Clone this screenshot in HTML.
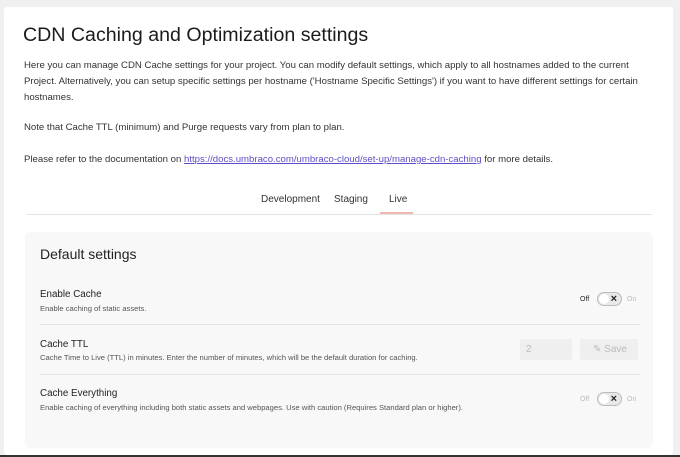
<!DOCTYPE html>
<html><head><style>
*{margin:0;padding:0;box-sizing:border-box}
body{width:680px;height:457px;background:#f0f0f0;font-family:"Liberation Sans",sans-serif;position:relative;overflow:hidden;color:#222}
.card{position:absolute;left:4px;top:7px;width:669px;height:448px;background:#fff;border-radius:3px}
.bot{position:absolute;left:0;top:455px;width:680px;height:2px;background:#333}
.a{position:absolute;white-space:nowrap}
h1{position:absolute;left:23px;top:24px;font-size:19.6px;font-weight:normal;color:#1b1b1b}
.p{font-size:9.6px;color:#333}
a{color:#5b4fc7;text-decoration:underline}
.tab{font-size:10px;color:#333}
.panel{position:absolute;left:25px;top:232px;width:628px;height:216px;background:#f8f8f8;border-radius:6px}
.lbl{font-size:9.8px;color:#222}
.desc{font-size:7.6px;color:#555}
.hr{position:absolute;left:40px;width:600px;height:1px;background:#e6e6e6}
.tg{position:absolute;width:25px;height:14px;border:1px solid #bbb;border-radius:7px;background:#e8e8e8}
.tg:before{content:"";position:absolute;left:1px;top:1px;width:10px;height:10px;border-radius:50%;background:#fff}
.tg:after{content:"×";position:absolute;right:4px;top:0;line-height:12px;font-size:11px;font-weight:bold;color:#222}
.sm{font-size:7px}
</style></head><body>
<div class="card"></div>
<div class="bot"></div>
<h1>CDN Caching and Optimization settings</h1>
<div class="a p" style="left:24px;top:60px">Here you can manage CDN Cache settings for your project. You can modify default settings, which apply to all hostnames added to the current</div>
<div class="a p" style="left:24px;top:76px">Project. Alternatively, you can setup specific settings per hostname ('Hostname Specific Settings') if you want to have different settings for certain</div>
<div class="a p" style="left:24px;top:92px">hostnames.</div>
<div class="a p" style="left:24px;top:122px">Note that Cache TTL (minimum) and Purge requests vary from plan to plan.</div>
<div class="a p" style="left:24px;top:154px">Please refer to the documentation on <a>https://docs.umbraco.com/umbraco-cloud/set-up/manage-cdn-caching</a> for more details.</div>
<div class="a tab" style="left:261px;top:194px">Development</div>
<div class="a tab" style="left:334px;top:194px">Staging</div>
<div class="a tab" style="left:389px;top:194px">Live</div>
<div class="a" style="left:26px;top:214px;width:626px;height:1px;background:#e4e4e4"></div>
<div class="a" style="left:380px;top:212px;width:33px;height:2px;background:#f0b8b0"></div>
<div class="panel"></div>
<div class="a" style="left:40px;top:246px;font-size:14px;color:#222">Default settings</div>
<div class="a lbl" style="left:40px;top:289px">Enable Cache</div>
<div class="a desc" style="left:40px;top:304px">Enable caching of static assets.</div>
<div class="hr" style="top:324px"></div>
<div class="a lbl" style="left:40px;top:339px">Cache TTL</div>
<div class="a desc" style="left:40px;top:353px">Cache Time to Live (TTL) in minutes. Enter the number of minutes, which will be the default duration for caching.</div>
<div class="hr" style="top:374px"></div>
<div class="a lbl" style="left:40px;top:388px">Cache Everything</div>
<div class="a desc" style="left:40px;top:403px">Enable caching of everything including both static assets and webpages. Use with caution (Requires Standard plan or higher).</div>
<div class="a sm" style="left:580px;top:296px;color:#222">Off</div>
<div class="tg" style="left:597px;top:292px"></div>
<div class="a sm" style="left:627px;top:296px;color:#bbb">On</div>
<div class="a" style="left:520px;top:339px;width:52px;height:21px;background:#efefef;border-radius:2px;font-size:10px;color:#bbb;padding:5px 6px">2</div>
<div class="a" style="left:580px;top:339px;width:58px;height:21px;background:#efefef;border-radius:2px;font-size:10px;color:#bbb;padding:5px 13px">✎ Save</div>
<div class="a sm" style="left:580px;top:396px;color:#bbb">Off</div>
<div class="tg" style="left:597px;top:392px"></div>
<div class="a sm" style="left:627px;top:396px;color:#bbb">On</div>
</body></html>
